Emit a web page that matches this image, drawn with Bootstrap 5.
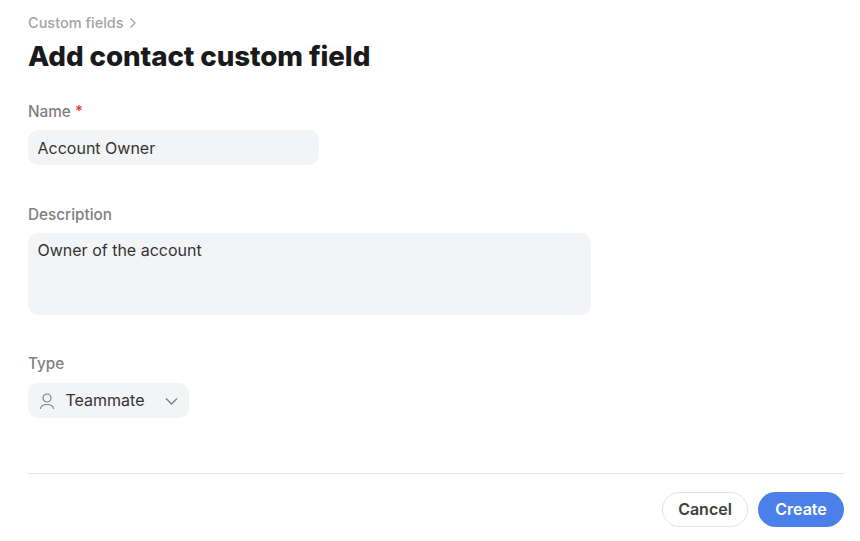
<!DOCTYPE html>
<html lang="en">
<head>
<meta charset="utf-8">
<title>Add contact custom field</title>
<link href="https://cdn.jsdelivr.net/npm/bootstrap@5.3.0/dist/css/bootstrap.min.css" rel="stylesheet">
<style>
html,body{height:541px;overflow:hidden;background:#fff}
body{font-family:Inter,"Liberation Sans",sans-serif;color:#1a1a1a}
.page-wrap{padding:10px 16px 0 28px}
.crumb{font-size:14.5px;font-weight:500;color:#a3a3a3;line-height:18px;gap:5px;text-decoration:none}
.page-title{font-size:27.75px;font-weight:800;line-height:34px;margin:5px 0 0;color:#1a1a1a;letter-spacing:-.1px}
.field-label{font-size:15.3px;font-weight:500;color:#808080;line-height:20px;margin:0 0 8px;display:block}
.req{color:#e0392f}
.fld{background:#f3f4f6;border:0;border-radius:10px;font-size:16px;color:#333;padding:0 9.5px;box-shadow:none}
.fld:focus{background:#f3f4f6;box-shadow:none;color:#333}
.fld-name{width:291px;height:35px}
.fld-desc{width:563px;height:82px;padding-top:7px;line-height:20px;resize:none}
.type-btn{width:161px;height:35px;background:#f3f4f6;border-radius:10px;font-size:16px;color:#333;border:0;padding:0 11px}
.sec-name{margin-top:29px}
.sec-desc{margin-top:40px}
.sec-type{margin-top:39px}
.sec-type .field-label{margin-bottom:9px}
.sep{margin:55px 0 0;border:0;border-top:1px solid #e3e3e3;opacity:1}
.foot{margin-top:18px}
.act{font-size:16px;font-weight:600;height:35px;border-radius:18px;padding:0 0 2px;display:flex;align-items:center;justify-content:center}
.act-cancel{width:86px;background:#fff;border:1px solid #e3e3e3;color:#404040}
.act-create{width:86px;background:#4a80e8;border:0;color:#fff;margin-left:2px}
.type-text{margin-left:10.500px;margin-top:-2px}
</style>
</head>
<body>
<div class="page-wrap">
  <a class="crumb d-inline-flex align-items-center" href="#">Custom fields
    <svg width="8" height="12" viewBox="0 0 8 12" fill="none" stroke="#a3a3a3" stroke-width="1.3"><path d="M1.5 1.5 6 6l-4.5 4.5"/></svg>
  </a>
  <h1 class="page-title">Add contact custom field</h1>

  <div class="sec-name">
    <label class="field-label" for="f1">Name <span class="req">*</span></label>
    <input id="f1" class="form-control fld fld-name" value="Account Owner">
  </div>
  <div class="sec-desc">
    <label class="field-label" for="f2">Description</label>
    <textarea id="f2" class="form-control fld fld-desc">Owner of the account</textarea>
  </div>
  <div class="sec-type">
    <label class="field-label">Type</label>
    <button type="button" class="btn type-btn d-flex align-items-center">
      <svg width="16" height="18" viewBox="0 0 16 18" fill="none" stroke="#808080" stroke-width="1.2" class="flex-shrink-0"><circle cx="8" cy="6" r="4"/><path d="M1.5 16.5c.5-3 3-4 6.500-4s6 1 6.500 4" stroke-linecap="round"/></svg>
      <span class="type-text">Teammate</span>
      <svg width="13" height="8" viewBox="0 0 13 8" fill="none" stroke="#808080" stroke-width="1.4" class="ms-auto"><path d="M1 1.500 6.500 7 12 1.500"/></svg>
    </button>
  </div>
  <hr class="sep">
  <div class="foot d-flex justify-content-end gap-2">
    <button type="button" class="btn act act-cancel">Cancel</button>
    <button type="button" class="btn act act-create">Create</button>
  </div>
</div>
<script src="https://cdn.jsdelivr.net/npm/bootstrap@5.3.0/dist/js/bootstrap.bundle.min.js"></script>
</body>
</html>
